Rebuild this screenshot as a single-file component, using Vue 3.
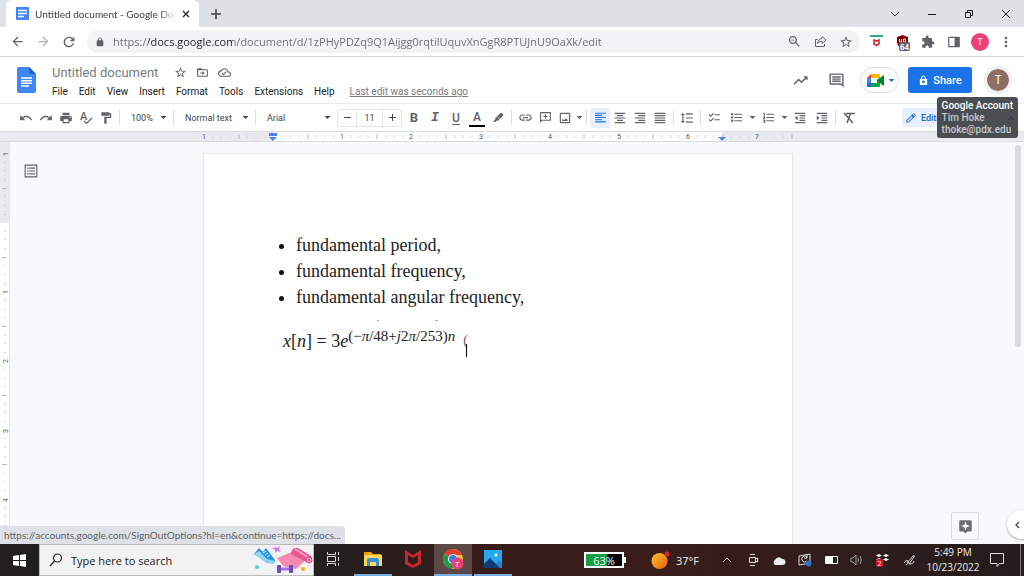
<script setup>
import { h, ref } from 'vue'

const paths = {
  back: 'M20 11H7.83l5.59-5.59L12 4l-8 8 8 8 1.41-1.41L7.83 13H20v-2z',
  forward: 'M12 4l-1.41 1.41L16.17 11H4v2h12.17l-5.58 5.59L12 20l8-8z',
  reload: 'M17.65 6.35C16.2 4.9 14.21 4 12 4c-4.42 0-7.99 3.58-8 8s3.58 8 8 8c3.73 0 6.84-2.55 7.73-6h-2.08c-.82 2.33-3.04 4-5.65 4-3.31 0-6-2.69-6-6s2.69-6 6-6c1.66 0 3.14.69 4.22 1.78L13 11h7V4l-2.35 2.35z',
  lock: 'M18 8h-1V6c0-2.76-2.24-5-5-5S7 3.24 7 6v2H6c-1.1 0-2 .9-2 2v10c0 1.1.9 2 2 2h12c1.1 0 2-.9 2-2V10c0-1.1-.9-2-2-2zM9 6c0-1.66 1.34-3 3-3s3 1.34 3 3v2H9V6z',
  shareLock: 'M18 8h-1V6c0-2.76-2.24-5-5-5S7 3.24 7 6v2H6c-1.1 0-2 .9-2 2v10c0 1.1.9 2 2 2h12c1.1 0 2-.9 2-2V10c0-1.1-.9-2-2-2zM9 6c0-1.66 1.34-3 3-3s3 1.34 3 3v2H9V6zM12 12a2.500 2.500 0 0 0 0 6a2.500 2.500 0 0 0 0-6z',
  star: 'M22 9.24l-7.19-.62L12 2 9.19 8.63 2 9.24l5.46 4.73L5.82 21 12 17.27 18.18 21l-1.63-7.03L22 9.24zM12 15.4l-3.76 2.27 1-4.28-3.32-2.88 4.38-.38L12 6.1l1.71 4.04 4.38.38-3.32 2.88 1 4.28L12 15.4z',
  puzzle: 'M20.5 11H19V7c0-1.1-.9-2-2-2h-4V3.5C13 2.12 11.88 1 10.5 1S8 2.12 8 3.5V5H4c-1.1 0-1.99.9-1.99 2v3.8H3.5c1.49 0 2.7 1.21 2.7 2.7s-1.21 2.7-2.7 2.7H2V20c0 1.1.9 2 2 2h3.8v-1.5c0-1.49 1.21-2.7 2.7-2.7 1.49 0 2.7 1.21 2.7 2.7V22H17c1.1 0 2-.9 2-2v-4h1.5c1.38 0 2.5-1.12 2.5-2.5S21.88 11 20.5 11z',
  panel: 'M2 3h20v18H2zM4 5v14h9V5z',
  more: 'M12 8c1.100 0 2-.9 2-2s-.9-2-2-2-2 .9-2 2 .9 2 2 2zm0 2c-1.100 0-2 .9-2 2s.9 2 2 2 2-.9 2-2-.9-2-2-2zm0 6c-1.100 0-2 .9-2 2s.9 2 2 2 2-.9 2-2-.9-2-2-2z',
  zoomOut: 'M15.500 14h-.79l-.28-.27C15.410 12.590 16 11.110 16 9.500 16 5.910 13.090 3 9.500 3S3 5.910 3 9.500 5.910 16 9.500 16c1.610 0 3.090-.59 4.230-1.570l.27.28v.79l5 4.990L20.490 19l-4.990-5zm-6 0C7.010 14 5 11.990 5 9.500S7.010 5 9.500 5 14 7.010 14 9.500 11.990 14 9.500 14zM7 9h5v1.500H7z',
  trend: 'M16 6l2.29 2.29-4.88 4.88-4-4L2 16.59 3.41 18l6-6 4 4 6.3-6.29L22 12V6z',
  comment: 'M21.99 4c0-1.1-.89-2-1.99-2H4c-1.1 0-2 .9-2 2v12c0 1.1.9 2 2 2h14l4 4-.01-18zM20 4v13.17L18.83 16H4V4h16zM6 12h12v2H6zm0-3h12v2H6zm0-3h12v2H6z',
  moveTo: 'M20 6h-8l-2-2H4c-1.100 0-2 .9-2 2v12c0 1.100.9 2 2 2h16c1.100 0 2-.9 2-2V8c0-1.100-.9-2-2-2zm0 12H4V8h16v10zM12 17l4-4-4-4v3H8v2h4z',
  cloudDone: 'M19.350 10.040C18.670 6.590 15.640 4 12 4 9.110 4 6.600 5.640 5.350 8.040 2.340 8.360 0 10.910 0 14c0 3.310 2.690 6 6 6h13c2.760 0 5-2.240 5-5 0-2.640-2.050-4.780-4.650-4.960zM19 18H6c-2.210 0-4-1.790-4-4s1.790-4 4-4h.71C7.370 7.690 9.480 6 12 6c3.040 0 5.500 2.460 5.500 5.500v.5H19c1.660 0 3 1.340 3 3s-1.340 3-3 3zm-9-3.820l-2.090-2.090L6.500 13.500 10 17l6.010-6.010-1.410-1.410z',
  undo: 'M12.5 8c-2.65 0-5.05.99-6.9 2.6L2 7v9h9l-3.62-3.62c1.39-1.16 3.16-1.88 5.12-1.88 3.54 0 6.55 2.31 7.6 5.5l2.37-.78C21.08 11.03 17.15 8 12.5 8z',
  redo: 'M18.4 10.6C16.55 8.99 14.15 8 11.5 8c-4.65 0-8.58 3.03-9.96 7.22L3.9 16c1.05-3.19 4.05-5.5 7.6-5.5 1.95 0 3.73.72 5.12 1.88L13 16h9V7l-3.6 3.6z',
  print: 'M19 8H5c-1.66 0-3 1.34-3 3v6h4v4h12v-4h4v-6c0-1.66-1.34-3-3-3zm-3 11H8v-5h8v5zm3-7c-.55 0-1-.45-1-1s.45-1 1-1 1 .45 1 1-.45 1-1 1zm-1-9H6v4h12V3z',
  paint: 'M18 4V3c0-.55-.45-1-1-1H5c-.55 0-1 .45-1 1v4c0 .55.45 1 1 1h12c.55 0 1-.45 1-1V6h1v4H9v11c0 .55.45 1 1 1h2c.55 0 1-.45 1-1v-9h8V4h-3z',
  highlight: 'M18 1l5 5-8 9-6-6zM8 10l6 6-3 3H7l-2 3H0l5-6v-3z',
  link: 'M3.9 12c0-1.71 1.39-3.1 3.1-3.1h4V7H7c-2.76 0-5 2.24-5 5s2.24 5 5 5h4v-1.9H7c-1.71 0-3.1-1.39-3.1-3.1zM8 13h8v-2H8v2zm9-6h-4v1.9h4c1.71 0 3.1 1.39 3.1 3.1s-1.39 3.1-3.1 3.1h-4V17h4c2.76 0 5-2.24 5-5s-2.24-5-5-5z',
  addComment: 'M2 2h20v16H6l-4 4zM4 4v13l1-1h15V4zM11 6h2v3h3v2h-3v3h-2v-3H8V9h3z',
  image: 'M5 3h14a2 2 0 0 1 2 2v14a2 2 0 0 1-2 2H5a2 2 0 0 1-2-2V5a2 2 0 0 1 2-2zM5 5v14h14V5zM7 17v-3h2v1l3 0 2-3 3 5z',
  left: 'M2 3h20v2H2zM2 7h13v2H2zM2 11h20v2H2zM2 15h13v2H2zM2 19h20v2H2z',
  center: 'M3 3h18v2H3zM7 7h10v2H7zM3 11h18v2H3zM7 15h10v2H7zM3 19h18v2H3z',
  right: 'M3 3h18v2H3zM9 7h12v2H9zM3 11h18v2H3zM9 15h12v2H9zM3 19h18v2H3z',
  justify: 'M3 3h18v2H3zM3 7h18v2H3zM3 11h18v2H3zM3 15h18v2H3zM3 19h18v2H3z',
  spacing: 'M6 7h2.500L5 3.500 1.500 7H4v10H1.500L5 20.500 8.500 17H6zM10 4h12v2H10zM10 11h12v2H10zM10 18h12v2H10z',
  checklist: 'M12 6h10v2H12zM12 15h10v2H12zM1 7l1.400-1.400L5 8l4.500-4.500L11 5 5 11zM1 16l1.400-1.400L5 17l4.500-4.500L11 14l-6 6z',
  bullets: 'M2 4h4v4H2zM2 10h4v4H2zM2 16h4v4H2zM8 5h14v2H8zM8 11h14v2H8zM8 17h14v2H8z',
  numbers: 'M2 3h3v6H3V5H2zM2 10h4v2l-2 2h2v1H2v-2l2-2H2zM2 16h4v6H2v-1h2v-1H3v-1h1v-1H2zM8 5h14v2H8zM8 11h14v2H8zM8 17h14v2H8z',
  outdent: 'M3 3h18v2H3zM11 7h10v2H11zM11 11h10v2H11zM11 15h10v2H11zM3 19h18v2H3zM3 12l5-4v8z',
  indent: 'M3 3h18v2H3zM11 7h10v2H11zM11 11h10v2H11zM11 15h10v2H11zM3 19h18v2H3zM3 8l5 4-5 4z',
  pencil: 'M1 17.500L15.500 3l5.500 5.500L6.500 23H1zM3 18.500V21h2.500L16 10.500 13.500 8zM17 1.500L18.500 0 24 5.500 22.500 7z',
  outline: 'M2 1h20a1 1 0 0 1 1 1v20a1 1 0 0 1-1 1H2a1 1 0 0 1-1-1V2a1 1 0 0 1 1-1zM3 3v18h18V3zM5 6h3v2H5zM9 6h10v2H9zM5 11h3v2H5zM9 11h10v2H9zM5 16h3v2H5zM9 16h10v2H9z',
  explore: 'M4 2h16a2 2 0 0 1 2 2v14a2 2 0 0 1-2 2h-5l-3 3-3-3H4a2 2 0 0 1-2-2V4a2 2 0 0 1 2-2zM12 4l-2 5-5 2 5 2 2 5 2-5 5-2-5-2z',
  down: 'M2 7h20L12 17z',
}

const Icon = (props) =>
  h('svg', { viewBox: '0 0 24 24', width: props.size, height: props.size, 'aria-hidden': 'true' }, [
    h('path', { d: paths[props.name], fill: 'currentColor', 'fill-rule': 'evenodd' }),
  ])
Icon.props = ['name', 'size']

const url = ref('https://docs.google.com/document/d/1zPHyPDZq9Q1Aijgg0rqtilUquvXnGgR8PTUJnU9OaXk/edit')
const title = ref('Untitled document')
const fontSize = ref('11')
const search = ref('')
const menus = ['File', 'Edit', 'View', 'Insert', 'Format', 'Tools', 'Extensions', 'Help']
const items = ['fundamental period,', 'fundamental frequency,', 'fundamental angular frequency,']

const INCH = 69.15
function ticks(count) {
  return Array.from({ length: count }, (_, i) => ({
    pos: Math.round((i * INCH) / 8),
    inch: i % 8 === 0,
    half: i % 8 === 4,
    label: Math.abs(i / 8 - 1),
  }))
}
const hTicks = ticks(69)
const vTicks = ticks(46)
</script>

<template>
  <div class="screen">
    <header class="tabs">
      <div class="tab">
        <svg width="13" height="13" viewBox="0 0 13 13" aria-hidden="true"><rect width="13" height="13" rx="1" fill="#4285f4" /><path d="M2 3.500h9M2 6.500h9M2 9.500h6" stroke="#fff" stroke-width="1.500" /></svg>
        <span class="tab-title">Untitled document - Google Docs</span>
        <button class="plain" aria-label="Close tab"><svg width="8" height="8" viewBox="0 0 8 8"><path d="M1 1l6 6M7 1L1 7" stroke="#333" stroke-width="1.500" /></svg></button>
      </div>
      <button class="plain new-tab" aria-label="New tab"><svg width="10" height="10" viewBox="0 0 10 10"><path d="M5 0v10M0 5h10" stroke="#3c4043" stroke-width="1.500" /></svg></button>
      <div class="window-controls">
        <button class="plain" aria-label="Search tabs"><svg width="10" height="10" viewBox="0 0 10 10"><path d="M1 3l4 4 4-4" fill="none" stroke="#444" /></svg></button>
        <button class="plain" aria-label="Minimize"><svg width="10" height="10" viewBox="0 0 10 10"><path d="M1 5.500h8" stroke="#111" /></svg></button>
        <button class="plain" aria-label="Restore"><svg width="10" height="10" viewBox="0 0 10 10"><path d="M1.500 3.500h5v5h-5zM3.500 3V1.500h5v5H7" fill="none" stroke="#222" /></svg></button>
        <button class="plain" aria-label="Close"><svg width="10" height="10" viewBox="0 0 10 10"><path d="M1 1l8 8M9 1L1 9" stroke="#222" /></svg></button>
      </div>
    </header>

    <nav class="address" aria-label="Browser">
      <button class="plain nav-btn" aria-label="Back"><Icon name="back" size="15" /></button>
      <button class="plain nav-btn faded" aria-label="Forward"><Icon name="forward" size="15" /></button>
      <button class="plain nav-btn" aria-label="Reload"><Icon name="reload" size="16" /></button>
      <div class="omnibox">
        <Icon name="lock" size="10" />
        <input v-model="url" class="url" type="text" aria-label="Address" spellcheck="false" />
        <button class="plain" aria-label="Zoom"><Icon name="zoomOut" size="15" /></button>
        <button class="plain" aria-label="Share page"><svg width="13" height="13" viewBox="0 0 13 13" fill="none" stroke="#5f6368"><path d="M3.500 4.500h-2v7h9V9" /><path d="M8 1.500l4 3.500-4 3.500V6.500C6 6.500 4.500 7 3.500 8.500 4 5.500 5.500 4 8 3.500z" /></svg></button>
        <button class="plain" aria-label="Bookmark"><Icon name="star" size="14" /></button>
      </div>
      <div class="extensions">
        <button class="plain" aria-label="McAfee"><svg width="13" height="13" viewBox="0 0 13 13"><path d="M0 1h13" stroke="#35a58c" stroke-width="2" /><path d="M4 5l2.500 1.200L9 5v4l-2.500 1.500L4 9z" fill="none" stroke="#c8202f" stroke-width="1.500" /></svg></button>
        <button class="plain shield" aria-label="uBlock"><svg width="13" height="14" viewBox="0 0 13 14"><path d="M6.500 0L12 2v5c0 3-2 5-5.500 7C3 12 1 10 1 7V2z" fill="#800000" /><path d="M3.500 4v3h2V4M7.500 4h2v3h-2z" fill="none" stroke="#fff" /></svg><span class="count">64</span></button>
        <button class="plain" aria-label="Extensions"><Icon name="puzzle" size="14" /></button>
        <button class="plain" aria-label="Side panel"><Icon name="panel" size="14" /></button>
        <button class="plain" aria-label="Profile"><span class="profile">T</span></button>
        <button class="plain" aria-label="Menu"><Icon name="more" size="16" /></button>
      </div>
    </nav>

    <section class="doc-header">
      <svg class="docs-logo" width="19" height="26" viewBox="0 0 19 26" aria-label="Docs"><path d="M2 0h10l7 7v17a2 2 0 0 1-2 2H2a2 2 0 0 1-2-2V2a2 2 0 0 1 2-2z" fill="#4285f4" /><path d="M12 0l7 7h-7z" fill="#1967d2" /><path d="M4 11h11M4 13.700h11M4 16.300h11M4 19h8" stroke="#fff" stroke-width="1.400" /></svg>
      <div class="doc-heading">
        <div class="title-row">
          <input v-model="title" class="title" type="text" aria-label="Document title" />
          <button class="plain" aria-label="Star"><Icon name="star" size="13" /></button>
          <button class="plain" aria-label="Move"><Icon name="moveTo" size="13" /></button>
          <button class="plain" aria-label="Saved"><Icon name="cloudDone" size="13" /></button>
        </div>
        <div class="menu-row">
          <button v-for="m in menus" :key="m" class="plain menu">{{ m }}</button>
          <a href="#history" class="last-edit">Last edit was seconds ago</a>
        </div>
      </div>
      <div class="doc-actions">
        <button class="plain" aria-label="Activity"><Icon name="trend" size="17" /></button>
        <button class="plain" aria-label="Comments"><Icon name="comment" size="17" /></button>
        <button class="meet" aria-label="Meet">
          <svg width="18" height="15" viewBox="0 0 18 15"><path d="M4 1h8a1 1 0 0 1 1 1v3H4z" fill="#fbbc04" /><path d="M4 1v4H0z" fill="#ea4335" /><path d="M0 5h4v5H0z" fill="#4285f4" /><path d="M0 10h4v4H1a1 1 0 0 1-1-1z" fill="#1967d2" /><path d="M4 10h6V6.500l3-2V13a1 1 0 0 1-1 1H4z" fill="#00a94b" /><path d="M10 7.500l6-5q1-.5 1 .5v9q0 1-1 .5z" fill="#00832d" /></svg>
          <Icon name="down" size="7" />
        </button>
        <button class="share"><Icon name="shareLock" size="11" />Share</button>
        <button class="account" aria-label="Google Account: Tim Hoke">T</button>
      </div>
      <div class="tooltip" role="tooltip"><strong>Google Account</strong><br />Tim Hoke<br />thoke@pdx.edu</div>
    </section>

    <div class="toolbar" role="toolbar" aria-label="Formatting">
      <button class="tool" aria-label="Undo"><Icon name="undo" size="14" /></button>
      <button class="tool" aria-label="Redo"><Icon name="redo" size="14" /></button>
      <button class="tool" aria-label="Print"><Icon name="print" size="14" /></button>
      <button class="tool" aria-label="Spelling"><svg width="14" height="14" viewBox="0 0 14 14"><text x="1" y="9" font-size="11" font-weight="500" fill="#5f6368">A</text><path d="M5 10l2.500 2.500L13 7" fill="none" stroke="#5f6368" stroke-width="1.200" /></svg></button>
      <button class="tool" aria-label="Paint format"><Icon name="paint" size="14" /></button>
      <i class="sep"></i>
      <label class="pick zoom"><select aria-label="Zoom"><option>100%</option></select><Icon name="down" size="7" /></label>
      <i class="sep"></i>
      <label class="pick"><select aria-label="Styles"><option>Normal text</option></select><Icon name="down" size="7" /></label>
      <i class="sep"></i>
      <label class="pick"><select aria-label="Font"><option>Arial</option></select><Icon name="down" size="7" /></label>
      <div class="size-box">
        <button class="plain" aria-label="Decrease font size"><svg width="7" height="7" viewBox="0 0 7 7"><path d="M0 3.500h7" stroke="#444746" /></svg></button>
        <input v-model="fontSize" type="text" aria-label="Font size" />
        <button class="plain" aria-label="Increase font size"><svg width="7" height="7" viewBox="0 0 7 7"><path d="M0 3.500h7M3.500 0v7" stroke="#444746" /></svg></button>
      </div>
      <div class="text-tools">
        <button class="tool bold" aria-label="Bold">B</button>
        <button class="tool italic" aria-label="Italic">I</button>
        <button class="tool underline" aria-label="Underline">U</button>
        <button class="tool color" aria-label="Text color">A</button>
        <button class="tool" aria-label="Highlight"><Icon name="highlight" size="11" /></button>
      </div>
      <i class="sep"></i>
      <button class="tool" aria-label="Insert link"><Icon name="link" size="15" /></button>
      <button class="tool" aria-label="Add comment"><Icon name="addComment" size="13" /></button>
      <button class="tool" aria-label="Insert image"><Icon name="image" size="14" /></button>
      <button class="caret" aria-label="Image options"><Icon name="down" size="7" /></button>
      <i class="sep"></i>
      <button class="tool active" aria-label="Align left"><Icon name="left" size="13" /></button>
      <button class="tool" aria-label="Align center"><Icon name="center" size="14" /></button>
      <button class="tool" aria-label="Align right"><Icon name="right" size="14" /></button>
      <button class="tool" aria-label="Justify"><Icon name="justify" size="14" /></button>
      <i class="sep"></i>
      <button class="tool" aria-label="Line spacing"><Icon name="spacing" size="14" /></button>
      <i class="sep"></i>
      <div class="list-tools">
        <button class="tool" aria-label="Checklist"><Icon name="checklist" size="13" /></button>
        <button class="tool" aria-label="Bulleted list"><Icon name="bullets" size="13" /></button>
        <button class="caret" aria-label="Bullet options"><Icon name="down" size="7" /></button>
        <button class="tool" aria-label="Numbered list"><Icon name="numbers" size="13" /></button>
        <button class="caret" aria-label="Number options"><Icon name="down" size="7" /></button>
        <button class="tool" aria-label="Decrease indent"><Icon name="outdent" size="14" /></button>
        <button class="tool" aria-label="Increase indent"><Icon name="indent" size="14" /></button>
      </div>
      <i class="sep"></i>
      <button class="tool" aria-label="Clear formatting"><svg width="14" height="14" viewBox="0 0 14 14" fill="none" stroke="#5f6368" stroke-width="1.500"><path d="M4 2.500h9M8.500 2.500L5 12M2 2l9 10" /></svg></button>
      <button class="mode"><Icon name="pencil" size="10" />Editing<Icon name="down" size="7" /></button>
      <i class="sep"></i>
      <button class="tool" aria-label="Hide menus"><svg width="8" height="8" viewBox="0 0 8 8"><path d="M1 6l3-3 3 3" fill="none" stroke="#444" stroke-width="1.500" /></svg></button>
    </div>

    <div class="ruler">
      <svg width="588" height="9" viewBox="0 0 588 9" aria-hidden="true">
        <rect x="69" width="449" height="9" fill="#fff" />
        <template v-for="t in hTicks" :key="t.pos">
          <text v-if="t.inch && t.label" :x="t.pos" y="7" class="mark">{{ t.label }}</text>
          <path v-else-if="!t.inch" :d="`M${t.pos} ${t.half ? 2 : 3}v${t.half ? 5 : 3}`" :stroke="t.half ? '#b5b8bc' : '#d5d7da'" />
        </template>
        <path d="M65 1h8v3h-8zM65 5h8l-4 4zM514 5h8l-4 4z" fill="#4285f4" />
      </svg>
    </div>

    <main class="workspace">
      <svg class="side-ruler" width="10" height="402" viewBox="0 0 10 402" aria-hidden="true">
        <rect width="10" height="81" fill="#e8eaed" />
        <path d="M9.500 0v402" stroke="#e4e6e9" />
        <template v-for="t in vTicks" :key="t.pos">
          <text v-if="t.inch" x="0" y="0" class="mark" :transform="`translate(8 ${t.pos + 12}) rotate(-90)`">{{ t.label || '' }}</text>
          <path v-else :d="`M${t.half ? 2 : 4} ${t.pos + 11}.5h${t.half ? 5 : 2}`" :stroke="t.half ? '#b5b8bc' : '#cfd1d4'" />
        </template>
      </svg>
      <button class="plain outline-btn" aria-label="Show outline"><Icon name="outline" size="14" /></button>
      <article class="page">
        <ul>
          <li v-for="item in items" :key="item">{{ item }}</li>
        </ul>
        <svg class="specks" width="70" height="3" viewBox="0 0 70 3" aria-hidden="true"><path d="M0 1.500h2M58 1.500h3" stroke="#aaa" /></svg>
        <p class="formula"><var>x</var>[<var>n</var>] = 3<var>e</var><sup>(−<var>π</var>/48+<var>j</var>2<var>π</var>/253)<var>n</var></sup><span class="paren">(</span><span class="caret-line"></span></p>
      </article>
      <div class="scrollbar"></div>
      <button class="explore" aria-label="Explore"><Icon name="explore" size="15" /></button>
      <button class="side-toggle" aria-label="Show side panel"><svg width="6" height="8" viewBox="0 0 6 8"><path d="M5 1L2 4l3 3" fill="none" stroke="#444" stroke-width="1.300" /></svg></button>
      <div class="status">https://accounts.google.com/SignOutOptions?hl=en&amp;continue=https://docs...</div>
    </main>

    <footer class="taskbar">
      <button class="plain start" aria-label="Start"><svg width="13" height="13" viewBox="0 0 13 13"><path d="M0 2l6-1v5H0zM7 1l6-1v6H7zM0 7h6v5l-6-1zM7 7h6v6l-6-1z" fill="#fff" /></svg></button>
      <label class="search">
        <svg width="14" height="14" viewBox="0 0 14 14" fill="none" stroke="#222" stroke-width="1.200"><circle cx="8.500" cy="5" r="4" /><path d="M5.500 8L1 13" /></svg>
        <input v-model="search" type="text" placeholder="Type here to search" aria-label="Search Windows" />
        <svg width="60" height="28" viewBox="0 0 60 28" aria-hidden="true"><path d="M1 8l5-6 4 4 3-4 9 12-1 3-7-1z" fill="#2b94d8" /><path d="M1 8l12 9 8 1 1-3-8-2-8-8z" fill="#8fd2f4" /><path d="M10 7l3-2M12 9l3-2M14 11l3-2" stroke="#d5f2ff" /><path d="M21 0l3 2 3-2-1 3 2 3-4-1-2 2v-3l-3-2h3z" fill="#d77aef" /><path d="M24 12l15-6 14 8-10 9-13-3z" fill="#f58ab0" /><path d="M39 4q2-3 6-2l13 8q2 3 0 6l-3 1-17-9z" fill="#e8588f" /><path d="M42 3l14 9" stroke="#ff9ec0" stroke-width="2" /><circle cx="56" cy="14" r="3" fill="#f9a3c3" stroke="#d54981" /><circle cx="56" cy="14" r="1" fill="#d54981" /><rect x="24" y="19" width="4" height="8" rx="1" fill="#6b4cbc" /><rect x="36" y="19" width="4" height="8" rx="1" fill="#6b4cbc" /><path d="M28 23h8" stroke="#9b78e3" stroke-width="3" /><circle cx="4" cy="21" r="2" fill="#54cee0" /><circle cx="50" cy="23" r="2" fill="#ffb000" /></svg>
      </label>
      <div class="apps">
        <button class="app" aria-label="Task view"><svg width="14" height="14" viewBox="0 0 14 14" fill="none" stroke="#ddd"><path d="M1.500 0v2.500h8V0M1.500 4.500h8v5h-8zM1.500 14v-2.500h8V14M12.500 0v3M12.500 5v4M12.500 11v3" /></svg></button>
        <button class="app open" aria-label="File Explorer"><svg width="18" height="16" viewBox="0 0 18 16"><path d="M0 1h7l2 2h8v12H0z" fill="#e6a500" /><path d="M0 4h18v11H0z" fill="#ffd45a" /><path d="M3 15V9a2 2 0 0 1 2-2h8a2 2 0 0 1 2 2v6h-3v-4H6v4z" fill="#3293d5" /></svg></button>
        <button class="app" aria-label="McAfee"><svg width="18" height="20" viewBox="0 0 18 20"><path d="M1 1l8 5 8-5v14l-8 4-8-4zM4 6v7l5 3 5-3V6L9 9z" fill="#c8282d" fill-rule="evenodd" /></svg></button>
        <button class="app open current" aria-label="Chrome"><svg width="22" height="22" viewBox="0 0 22 22"><circle cx="11" cy="11" r="10" fill="#fbc116" /><path d="M11 11L2.300 6A10 10 0 0 1 20 7H11z" fill="#e33b2e" /><path d="M11 11L2.300 6A10 10 0 0 0 10 21l5-8z" fill="#279847" /><circle cx="11" cy="11" r="5" fill="#fff" /><circle cx="11" cy="11" r="4" fill="#377ded" /><circle cx="15.500" cy="15.500" r="6" fill="#e83f78" /><text x="13" y="19" font-size="8" fill="#fff">T</text></svg></button>
        <button class="app open" aria-label="Photos"><svg width="18" height="18" viewBox="0 0 18 18"><path d="M0 0h18v18H0z" fill="#27a8ec" /><path d="M9 18l6-8 3 3v5z" fill="#317bd0" /><path d="M0 14l6-6 10 10H0z" fill="#123a75" /><circle cx="12" cy="5" r="1.500" fill="#fff" /></svg></button>
      </div>
      <div class="battery"><span>63%</span></div>
      <div class="tray">
        <button class="weather"><svg width="19" height="19" viewBox="0 0 19 19"><defs><linearGradient id="sun" x2="1" y2="1"><stop stop-color="#f7c52e" /><stop offset="1" stop-color="#ef5b0c" /></linearGradient></defs><circle cx="8.500" cy="10" r="8" fill="url(#sun)" /><circle cx="16" cy="3" r="2.500" fill="#d02e21" /></svg>37°F</button>
        <button class="tray-btn" aria-label="Hidden icons"><svg width="10" height="8" viewBox="0 0 10 8"><path d="M1 6l4-4 4 4" fill="none" stroke="#ddd" /></svg></button>
        <button class="tray-btn" aria-label="Camera"><svg width="11" height="12" viewBox="0 0 11 12" fill="none" stroke="#ddd"><path d="M1.500 3.500h6v5h-6zM7.500 5l2-1v4l-2-1M2 .5h5M2 11.500h5" /></svg></button>
        <button class="tray-btn" aria-label="OneDrive"><svg width="14" height="9" viewBox="0 0 14 9"><path d="M3 9a3 3 0 0 1 0-5 4 4 0 0 1 7-1 3 3 0 0 1 1 6z" fill="#eee" /></svg></button>
        <button class="tray-btn" aria-label="Sync"><svg width="14" height="14" viewBox="0 0 14 14"><path d="M1 3l11-2v9L1 12z" fill="none" stroke="#ddd" /><path d="M9 4a3 3 0 1 0 0 4M9 2v3H6" fill="none" stroke="#ddd" /><circle cx="10.500" cy="10.500" r="3" fill="#2b70c9" /></svg></button>
        <button class="tray-btn" aria-label="Battery"><svg width="13" height="8" viewBox="0 0 13 8"><path d="M.5.5h12v7H.5z" fill="none" stroke="#eee" /><path d="M1 1h7v6H1z" fill="#fff" /></svg></button>
        <button class="tray-btn" aria-label="Volume"><svg width="14" height="12" viewBox="0 0 14 12" fill="none" stroke="#999"><path d="M1 4h2l3-3v10L3 8H1zM8 4q1 2 0 4M10 2q2.500 4 0 8" /></svg></button>
        <button class="tray-btn" aria-label="Dropbox"><svg width="14" height="14" viewBox="0 0 14 14"><path d="M3 1l3 1.500L3 4 0 2.500zM10 1l3 1.500L10 4 7 2.500zM3 5l3 1.500L3 8 0 6.500zM10 5l3 1.500L10 8 7 6.500z" fill="#fff" /><rect y="6" width="7" height="8" rx="2" fill="#d4142a" /><text x="1.500" y="13" font-size="7" fill="#fff">2</text></svg></button>
        <button class="tray-btn" aria-label="Pen"><svg width="13" height="13" viewBox="0 0 13 13" fill="none" stroke="#ddd"><path d="M1 9q2-4 4-2t-2 4M4 9l6-7q2-1 1 1l-5 7M6 10q5 0 5-3" /></svg></button>
        <div class="clock">5:49 PM<br />10/23/2022</div>
        <button class="tray-btn notice" aria-label="Notifications"><svg width="14" height="14" viewBox="0 0 14 14"><path d="M.5.5h13v10h-4l-2.500 3v-3H.5z" fill="none" stroke="#ddd" /></svg></button>
      </div>
    </footer>
  </div>
</template>

<style>
body { margin: 0; overflow: hidden; }
</style>

<style scoped>
.screen { display: flex; flex-direction: column; height: 100vh; overflow: hidden; font-family: Roboto, "Open Sans", sans-serif; color: #202124; background: #fff; }
.screen, .screen * { box-sizing: border-box; }
svg { display: block; flex: none; }
button, input, select { font: inherit; color: inherit; }
button { border: 0; padding: 0; background: none; display: flex; align-items: center; justify-content: center; flex: none; }
input, select { border: 0; padding: 0; background: none; outline: none; min-width: 0; }
.plain { color: #5f6368; }

.tabs { display: flex; align-items: center; height: 27px; flex: none; background: #dee1e6; padding-left: 6px; }
.tab { display: flex; align-items: center; width: 193px; height: 27px; padding: 0 9px 0 10px; background: #fff; border-radius: 6px 6px 0 0; font: 10px Lato, "Open Sans", sans-serif; color: #3c4043; }
.tab-title { flex: 1; margin: 0 6px; overflow: hidden; white-space: nowrap; mask-image: linear-gradient(to right, #000 88%, transparent); }
.new-tab { margin-left: 12px; }
.window-controls { display: flex; gap: 27px; margin-left: auto; padding-right: 13px; }

.address { display: flex; align-items: center; height: 30px; flex: none; padding: 0 5px 0 4px; border-bottom: 1px solid #d5d7da; }
.nav-btn { width: 26px; height: 24px; }
.faded { opacity: .5; }
.omnibox { display: flex; align-items: center; flex: 1; height: 23px; margin-left: 5px; padding: 0 7px 0 8px; border-radius: 12px; background: #f1f3f4; gap: 12px; color: #5f6368; }
.url { flex: 1; margin-left: -4px; height: 20px; font: 11px "Open Sans", sans-serif; color: transparent; background: linear-gradient(to right, #6b6f73 35px, #202124 35px 120px, #6b6f73 120px); background-clip: text; -webkit-background-clip: text; }
.extensions { display: flex; align-items: center; margin-left: 3px; }
.extensions .plain { width: 26px; }
.shield { position: relative; }
.count { position: absolute; left: 10px; top: 7px; padding: 0 1px; border-radius: 2px; background: #5f6368; color: #fff; font: bold 8px/9px "Open Sans", sans-serif; }
.profile { width: 18px; height: 18px; border-radius: 50%; background: #ec407a; color: #fff; font-size: 9px; line-height: 18px; text-align: center; }

.doc-header { position: relative; display: flex; align-items: center; height: 47px; flex: none; padding: 0 12px 0 17px; border-bottom: 1px solid #e8eaed; }
.doc-heading { margin-left: 16px; padding-top: 3px; }
.title-row { display: flex; align-items: center; gap: 9px; height: 19px; }
.title { width: 113px; height: 18px; font: 13px Roboto, sans-serif; color: #777b80; }
.menu-row { display: flex; align-items: center; gap: 11px; height: 18px; font-size: 10px; }
.menu { color: #202124; }
.last-edit { margin-left: 4px; color: #777b80; white-space: nowrap; }
.doc-actions { display: flex; align-items: center; margin-left: auto; gap: 19px; }
.meet { width: 39px; height: 26px; gap: 3px; padding-left: 2px; border: 1px solid #dadce0; border-radius: 13px; color: #1a73e8; margin-left: -4px; }
.share { width: 64px; height: 26px; margin-left: -10px; border-radius: 3px; gap: 4px; background: #1a73e8; color: #fff; font-size: 11px; font-weight: 500; }
.account { width: 28px; height: 28px; margin-left: -7px; border: 3px solid #eeeff1; border-radius: 50%; background: #8d6e63; background-clip: padding-box; color: #fff; font-size: 12px; }
.tooltip { position: absolute; z-index: 5; top: 40px; right: 6px; padding: 3px 5px 2px; border-radius: 3px; background: rgba(60, 64, 67, .92); color: #c4c7ca; font-size: 10px; line-height: 12px; font-weight: 500; white-space: nowrap; }
.tooltip strong { color: #fff; font-weight: 500; }

.toolbar { display: flex; align-items: center; height: 28px; flex: none; padding: 0 3px 0 16px; border-bottom: 1px solid #dadce0; color: #444746; font-size: 9px; }
.tool { width: 20px; height: 20px; color: #5f6368; }
.tool.active { background: #e8f0fe; color: #1a73e8; border-radius: 2px; }
.sep { width: 1px; height: 15px; margin: 0 3px; background: #dadce0; flex: none; }
.pick { display: flex; align-items: center; width: 75px; padding: 0 3px 0 8px; }
.pick.zoom { width: 47px; }
.pick select { flex: 1; appearance: none; }
.size-box { display: flex; align-items: stretch; width: 65px; height: 18px; margin: 0 2px 0 3px; border: 1px solid #e3e5e8; border-radius: 3px; }
.size-box button { width: 18px; }
.size-box input { flex: 1; text-align: center; border: solid #e3e5e8; border-width: 0 1px; }
.text-tools { display: flex; align-items: center; gap: 1px; }
.list-tools { display: flex; align-items: center; gap: 2px; }
.bold { font-size: 13px; font-weight: 700; }
.italic { font: italic bold 13px "Liberation Mono", monospace; }
.underline { font-size: 12px; font-weight: 500; text-decoration: underline; text-underline-offset: 2px; }
.color { width: 16px; margin: 0 2px; font-size: 12px; font-weight: 500; line-height: 14px; border-bottom: 2px solid #000; height: 18px; }
.caret { width: 8px; height: 20px; color: #5f6368; }
.mode { width: 92px; height: 19px; margin-left: auto; padding: 0 6px 0 4px; justify-content: flex-start; gap: 5px; border-radius: 2px; background: #e8f0fe; color: #1967d2; font-weight: 500; }
.mode svg:last-child { margin-left: auto; }

.ruler { display: flex; justify-content: center; height: 10px; flex: none; padding-right: 28px; background: #e8eaed; border-bottom: 1px solid #dadce0; }
.ruler svg { overflow: visible; }
.mark { font: 7px Roboto, sans-serif; fill: #555; text-anchor: middle; }

.workspace { position: relative; display: flex; align-items: flex-start; flex: 1; min-height: 0; overflow: hidden; background: #f8f9fa; }
.side-ruler { background: #fff; }
.outline-btn { margin: 22px 0 0 14px; }
.page { width: 588px; height: 762px; margin: 12px auto 0; padding: 78px 69px; background: #fff; box-shadow: 0 0 1px 1px #e8eaed; font: 18px/26px "Liberation Serif", serif; color: #222; }
.workspace::after { content: ""; width: 66px; flex: none; }
.page ul { margin: 0; padding-left: 23px; }
.page li { list-style: none; position: relative; }
.page li::before { content: ""; position: absolute; left: -17px; top: 12px; width: 5px; height: 5px; border-radius: 50%; background: #111; }
.specks { margin: 9px 0 0 104px; }
.formula { display: flex; align-items: center; margin: 2px 0 0 10px; white-space: pre; }
.formula sup { font-size: 15px; line-height: 14px; margin-bottom: 10px; vertical-align: baseline; }
.paren { margin-left: 8px; font-size: 14px; line-height: 14px; color: #666; }
.caret-line { width: 1px; height: 13px; margin: 20px 0 0 -2px; background: #000; }
.scrollbar { position: absolute; right: 3px; top: 3px; width: 6px; height: 202px; border-radius: 3px; background: #dadce0; }
.explore { position: absolute; right: 45px; bottom: 4px; width: 28px; height: 28px; border: 1px solid #dadce0; border-radius: 2px; color: #6b6f73; }
.side-toggle { position: absolute; right: -12px; bottom: 5px; width: 29px; height: 29px; padding-right: 10px; border-radius: 50%; background: #fff; box-shadow: 0 1px 2px #aaa; }
.status { position: absolute; left: 0; bottom: 0; height: 18px; padding: 0 4px; border-radius: 0 3px 0 0; background: #dee1e6; color: #5f6368; font: 10px/18px Lato, "Open Sans", sans-serif; white-space: nowrap; }

.taskbar { display: flex; align-items: center; height: 32px; flex: none; background: linear-gradient(to right, #211e1f, #241e1f 32%, #371c1a 48%, #391d1a 65%, #2e1d1c 85%, #241c1c); color: #eee; font: 11px "Open Sans", sans-serif; }
.start { width: 39px; height: 32px; }
.search { display: flex; align-items: center; width: 275px; height: 32px; padding: 0 0 0 9px; background: #f2f2f2; border: 1px solid #bbb; }
.search input { flex: 1; margin-left: 8px; }
.search input::placeholder { color: #222; opacity: 1; }
.apps { display: flex; gap: 2px; }
.app { width: 38px; height: 32px; border-bottom: 2px solid transparent; }
.app.open { border-color: #76b0e0; }
.app.current { background: #5c4947; }
.battery { position: relative; display: flex; align-items: center; justify-content: center; width: 40px; height: 16px; margin-left: 72px; border: 2px solid #fff; background: linear-gradient(to right, #169b48 58%, #000 58%); color: #fff; }
.battery::after { content: ""; position: absolute; right: -4px; top: 3px; width: 2px; height: 6px; background: #fff; }
.tray { display: flex; align-items: center; margin: 0 3px 0 auto; border-right: 1px solid #877; }
.weather { gap: 6px; margin-right: 15px; }
.tray-btn { width: 26px; height: 32px; }
.clock { width: 62px; text-align: center; font-size: 10px; line-height: 15px; }
.notice { margin-right: 10px; }
</style>
